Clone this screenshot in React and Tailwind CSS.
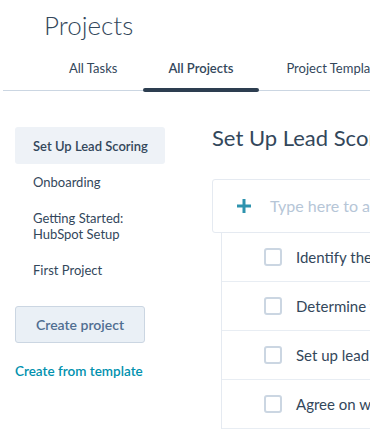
const projects = [
  { name: "Set Up Lead Scoring", active: true },
  { name: "Onboarding" },
  { name: "Getting Started:\nHubSpot Setup" },
  { name: "First Project" },
];

const tasks = [
  "Identify the key attributes of your ideal customer",
  "Determine which behaviors signal buying intent",
  "Set up lead scoring properties in HubSpot",
  "Agree on what score makes a lead sales-ready",
];

export default function App() {
  return (
    <div
      className="h-[445px] w-[370px] overflow-hidden bg-white text-[#33475b]"
      style={{ fontFamily: "Lato, 'Noto Sans', sans-serif" }}
    >
      <h1 className="pl-[44px] pt-[7px] text-[26px] font-light leading-[36px]">Projects</h1>

      <div className="relative mt-[8px] ml-[3px] w-[900px] border-b border-[#cbd6e2]">
        <nav className="flex h-[39px] items-start text-[13px] leading-[16px]">
          <a className="ml-[66px] pt-[9px]">All Tasks</a>
          <a className="relative ml-[51px] pt-[9px] font-semibold">
            All Projects
            <span className="absolute left-[-25px] right-[-26px] top-[37px] h-[4px] rounded-full bg-[#2d3e50]" />
          </a>
          <a className="ml-[53px] whitespace-nowrap pt-[9px]">Project Templates</a>
        </nav>
      </div>

      <div className="mt-[36px] flex w-[900px]">
        <aside className="ml-[15px] w-[150px] shrink-0">
          <ul className="flex flex-col text-[13px] leading-[16px]">
            {projects.map((p) => (
              <li
                key={p.name}
                className={
                  p.active
                    ? "whitespace-pre rounded-[3px] bg-[#eef2f7] py-[10.5px] pl-[18px] font-semibold"
                    : "whitespace-pre py-[10px] pl-[18px]"
                }
              >
                {p.name}
              </li>
            ))}
          </ul>
          <button className="mt-[18px] h-[37px] w-[130px] rounded-[3px] border border-[#cbd6e2] bg-[#eaf0f6] text-[14px] font-semibold text-[#506e91]">
            Create project
          </button>
          <a className="mt-[18px] block text-[13.5px] font-semibold text-[#0091ae]">Create from template</a>
        </aside>

        <main className="ml-[47px] flex-1">
          <h2 className="mt-[-4px] whitespace-nowrap text-[22px] leading-[30px]">Set Up Lead Scoring</h2>
          <div className="mt-[26px] w-[600px]">
            <div className="flex h-[54px] items-center rounded-[3px] border border-[#e5eaf1] pl-[23px]">
              <svg width="16" height="16" viewBox="0 0 16 16" className="shrink-0">
                <path d="M8 1v14M1 8h14" stroke="#2e93ae" strokeWidth="3" />
              </svg>
              <span className="ml-[18px] whitespace-nowrap text-[16px] text-[#b6c6d7]">Type here to add a task</span>
            </div>
            <ul className="ml-[9px] border-l border-[#e5eaf1]">
              {tasks.map((t) => (
                <li key={t} className="flex h-[49px] items-center border-b border-[#e8edf3] pl-[42px] text-[15px]">
                  <span className="h-[18px] w-[18px] shrink-0 rounded-[3px] border-2 border-[#cbd6e2]" />
                  <span className="ml-[14px] whitespace-nowrap">{t}</span>
                </li>
              ))}
            </ul>
          </div>
        </main>
      </div>
    </div>
  );
}
